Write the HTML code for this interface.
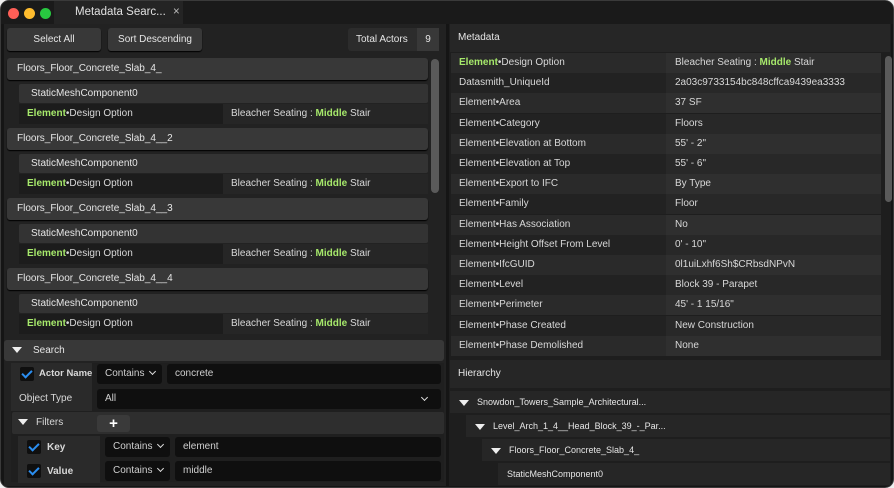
<!DOCTYPE html>
<html><head><style>
*{box-sizing:border-box;margin:0;padding:0}
body{width:894px;height:488px;background:#f0f0f0;font-family:"Liberation Sans",sans-serif;font-size:10px;color:#d8d8d8;overflow:hidden;position:relative}
.win{position:absolute;left:0;top:0;width:894px;height:488px;background:#151515;border-radius:9px;overflow:hidden;border:1px solid #3a3a3a}
.a{position:absolute}
.dot{position:absolute;top:7px;width:11px;height:11px;border-radius:50%}
.btn{position:absolute;background:#383838;border-radius:3px;text-align:center;line-height:23px;color:#e6e6e6;box-shadow:0 1px 1px #000}
.g{color:#a6e86b;font-weight:bold}
.row{position:absolute;height:20px;line-height:20px;white-space:nowrap;overflow:hidden}
.chk{position:absolute;width:14px;height:14px;background:#0f0f0f;border-radius:2px}
.chk:after{content:"";position:absolute;left:4px;top:1px;width:4px;height:8px;border:solid #2b8ef0;border-width:0 2px 2px 0;transform:rotate(45deg)}
.inp{position:absolute;background:#0f0f0f;border-radius:3px;height:20px;line-height:20px;padding-left:8px;color:#cfcfcf}
.tri{display:inline-block;width:0;height:0;border-left:5px solid transparent;border-right:5px solid transparent;border-top:6px solid #eee;vertical-align:middle}
.chev{display:inline-block;width:5px;height:5px;border:solid #ddd;border-width:0 1.5px 1.5px 0;transform:rotate(45deg);margin-left:6px;position:relative;top:-2px}
</style></head><body><div class="win">
<div class="a" style="left:0;top:0;width:894px;height:23px;background:#1a1a1a"></div>
<div class="dot" style="left:7px;background:#fe5f57"></div>
<div class="dot" style="left:23px;background:#febc2e"></div>
<div class="dot" style="left:39px;background:#28c840"></div>
<div class="a" style="left:53px;top:0;width:129px;height:23px;background:#242424;line-height:23px;padding-left:21px;font-size:11.5px;color:#e0e0e0">Metadata Searc... <span style="margin-left:4px;color:#bbb">×</span></div>

<div class="a" style="left:3px;top:23px;width:442px;height:462px;background:#222"></div>
<div class="btn" style="left:6px;top:27px;width:94px">Select All</div>
<div class="btn" style="left:107px;top:27px;width:94px">Sort Descending</div>
<div class="a" style="left:347px;top:27px;width:91px;height:23px;background:#2c2c2c;border-radius:3px;line-height:23px;padding-left:8px;color:#e6e6e6">Total Actors<span class="a" style="left:69px;top:0;width:22px;height:23px;background:#383838;text-align:center">9</span></div>

<div class="a" style="left:5px;top:54px;width:424px;height:280px;overflow:hidden">
<div id="list"></div>
</div>
<div class="a" style="left:430px;top:58px;width:8px;height:134px;background:#5a5a5a;border-radius:4px"></div>

<div class="a" style="left:3px;top:339px;width:440px;height:21px;background:#383838;border-radius:3px;line-height:21px;padding-left:8px;color:#e6e6e6"><span class="tri"></span><span style="margin-left:11px">Search</span></div>
<div class="a" style="left:10px;top:362px;width:433px;height:119px;background:#1f1f1f"></div>
<div class="a" style="left:10px;top:362px;width:81px;height:48px;background:#2a2a2a"></div>
<div class="chk" style="left:19px;top:366px"></div>
<div class="a" style="left:38px;top:367px;font-weight:bold;font-size:9.5px">Actor Name</div>
<div class="inp" style="left:96px;top:363px;width:65px">Contains<span class="chev"></span></div>
<div class="inp" style="left:166px;top:363px;width:274px">concrete</div>
<div class="a" style="left:18px;top:392px">Object Type</div>
<div class="inp" style="left:96px;top:388px;width:344px">All<span class="chev" style="position:absolute;right:14px;top:6px"></span></div>
<div class="a" style="left:11px;top:411px;width:432px;height:22px;background:#2e2e2e;border-radius:2px"></div>
<div class="a" style="left:17px;top:416px;line-height:12px"><span class="tri"></span><span style="margin-left:8px">Filters</span></div>
<div class="a" style="left:96px;top:414px;width:33px;height:17px;background:#3a3a3a;border-radius:3px;text-align:center;line-height:17px;font-size:15px;font-weight:bold;color:#fff">+</div>
<div class="a" style="left:17px;top:435px;width:82px;height:47px;background:#2a2a2a"></div>
<div class="chk" style="left:26px;top:439px"></div>
<div class="a" style="left:46px;top:441px;font-weight:bold">Key</div>
<div class="inp" style="left:104px;top:436px;width:65px">Contains<span class="chev"></span></div>
<div class="inp" style="left:174px;top:436px;width:266px">element</div>
<div class="chk" style="left:26px;top:463px"></div>
<div class="a" style="left:46px;top:465px;font-weight:bold">Value</div>
<div class="inp" style="left:104px;top:460px;width:65px">Contains<span class="chev"></span></div>
<div class="inp" style="left:174px;top:460px;width:266px">middle</div>

<div class="a" style="left:448px;top:23px;width:442px;height:462px;background:#1e1e1e"></div>
<div class="a" style="left:449px;top:23px;width:440px;height:28px;background:#262626;line-height:27px;padding-left:8px;color:#e6e6e6">Metadata</div>
<div id="meta"></div>
<div class="a" style="left:884px;top:55px;width:7px;height:146px;background:#5a5a5a;border-radius:4px"></div>
<div class="a" style="left:449px;top:359px;width:440px;height:28px;background:#262626;line-height:28px;padding-left:8px;color:#e6e6e6">Hierarchy</div>
</div>
<script>
var L=document.getElementById('list'),h='';
var names=['Floors_Floor_Concrete_Slab_4_','Floors_Floor_Concrete_Slab_4__2','Floors_Floor_Concrete_Slab_4__3','Floors_Floor_Concrete_Slab_4__4'];
for(var i=0;i<4;i++){var y=3+i*70;
h+='<div class="a" style="left:1px;top:'+y+'px;width:421px;height:22px;background:#383838;border-radius:3px;line-height:22px;padding-left:10px;color:#e6e6e6;box-shadow:0 1px 1px #000">'+names[i]+'</div>';
h+='<div class="a" style="left:13px;top:'+(y+26)+'px;width:409px;height:19px;background:#333;border-radius:2px;line-height:19px;padding-left:12px;color:#e6e6e6">StaticMeshComponent0</div>';
h+='<div class="a" style="left:13px;top:'+(y+46)+'px;width:204px;height:20px;background:#1c1c1c;line-height:20px;padding-left:8px"><span class="g">Element</span>•Design Option</div>';
h+='<div class="a" style="left:217px;top:'+(y+46)+'px;width:205px;height:20px;background:#262626;line-height:20px;padding-left:8px">Bleacher Seating : <span class="g">Middle</span> Stair</div>';}
L.innerHTML=h;
var M=[['<span class="g">Element</span>•Design Option','Bleacher Seating : <span class="g">Middle</span> Stair'],['Datasmith_UniqueId','2a03c9733154bc848cffca9439ea3333'],['Element•Area','37 SF'],['Element•Category','Floors'],['Element•Elevation at Bottom','55\' - 2"'],['Element•Elevation at Top','55\' - 6"'],['Element•Export to IFC','By Type'],['Element•Family','Floor'],['Element•Has Association','No'],['Element•Height Offset From Level','0\' - 10"'],['Element•IfcGUID','0l1uiLxhf6Sh$CRbsdNPvN'],['Element•Level','Block 39 - Parapet'],['Element•Perimeter','45\' - 1 15/16"'],['Element•Phase Created','New Construction'],['Element•Phase Demolished','None']];
h='';
for(var i=0;i<M.length;i++){var y=52+i*20.2,o=i%2==0;
h+='<div class="row" style="left:450px;top:'+y+'px;width:215px;background:'+(o?'#2a2a2a':'#222')+';padding-left:8px">'+M[i][0]+'</div>';
h+='<div class="row" style="left:665px;top:'+y+'px;width:215px;background:'+(o?'#2f2f2f':'#282828')+';padding-left:9px">'+M[i][1]+'</div>';}
var H=['Snowdon_Towers_Sample_Architectural...','Level_Arch_1_4__Head_Block_39_-_Par...','Floors_Floor_Concrete_Slab_4_','StaticMeshComponent0'];
for(var i=0;i<4;i++){var x=449+i*16,y=390+i*24;
h+='<div class="a" style="left:'+x+'px;top:'+y+'px;width:'+(440-i*16)+'px;height:22px;background:#262626;line-height:22px;padding-left:9px;font-size:9px;color:#e6e6e6">'+(i<3?'<span class="tri" style="margin-right:8px"></span>':'')+H[i]+'</div>';}
document.getElementById('meta').innerHTML=h;
</script>
</body></html>
